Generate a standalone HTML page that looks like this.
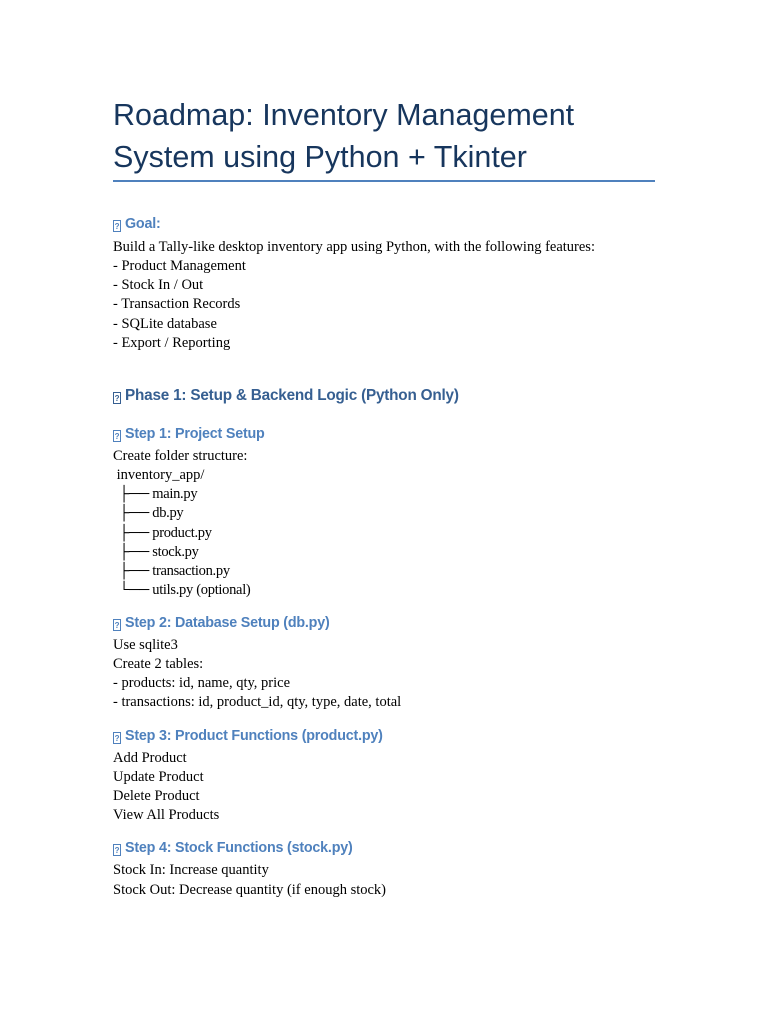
<!DOCTYPE html>
<html><head><meta charset="utf-8"><style>
body{margin:0;background:#fff;width:768px;height:1024px;position:relative;overflow:hidden}
div{position:absolute;left:113px;white-space:nowrap}
.t{font-family:"Liberation Sans",sans-serif;font-size:30.5px;color:#17365d;line-height:40px}
.b{font-family:"Liberation Serif",serif;font-size:14.5px;color:#000;line-height:18px}
.h1{font-family:"Liberation Sans",sans-serif;font-size:15.3px;font-weight:bold;color:#365f91;line-height:20px;letter-spacing:-0.2px}
.h2{font-family:"Liberation Sans",sans-serif;font-size:14.3px;font-weight:bold;color:#4f81bd;line-height:20px;letter-spacing:-0.2px}
.q{display:inline-block;width:8px;height:12px;border:1px solid currentColor;font-size:8px;line-height:11px;text-align:center;vertical-align:-1px;margin-right:4px;box-sizing:border-box}
.tr{left:119px;letter-spacing:-0.3px}
</style></head><body>
<div class="t" style="top:95px">Roadmap: Inventory Management</div>
<div class="t" style="top:137px">System using Python + Tkinter</div>
<div style="top:180px;width:542px;height:2px;background:#4f81bd"></div>

<div class="h2" style="top:214px"><span class="q">?</span>Goal:</div>
<div class="b" style="top:238px">Build a Tally-like desktop inventory app using Python, with the following features:</div>
<div class="b" style="top:257px">- Product Management</div>
<div class="b" style="top:276px">- Stock In / Out</div>
<div class="b" style="top:295px">- Transaction Records</div>
<div class="b" style="top:315px">- SQLite database</div>
<div class="b" style="top:334px">- Export / Reporting</div>

<div class="h1" style="top:386px"><span class="q">?</span>Phase 1: Setup &amp; Backend Logic (Python Only)</div>
<div class="h2" style="top:424px"><span class="q">?</span>Step 1: Project Setup</div>
<div class="b" style="top:447px">Create folder structure:</div>
<div class="b" style="top:466px">&nbsp;inventory_app/</div>
<div class="b tr" style="top:485px">├── main.py</div>
<div class="b tr" style="top:504px">├── db.py</div>
<div class="b tr" style="top:524px">├── product.py</div>
<div class="b tr" style="top:543px">├── stock.py</div>
<div class="b tr" style="top:562px">├── transaction.py</div>
<div class="b tr" style="top:581px">└── utils.py (optional)</div>

<div class="h2" style="top:613px"><span class="q">?</span>Step 2: Database Setup (db.py)</div>
<div class="b" style="top:636px">Use sqlite3</div>
<div class="b" style="top:655px">Create 2 tables:</div>
<div class="b" style="top:674px">- products: id, name, qty, price</div>
<div class="b" style="top:693px">- transactions: id, product_id, qty, type, date, total</div>

<div class="h2" style="top:726px"><span class="q">?</span>Step 3: Product Functions (product.py)</div>
<div class="b" style="top:749px">Add Product</div>
<div class="b" style="top:768px">Update Product</div>
<div class="b" style="top:787px">Delete Product</div>
<div class="b" style="top:806px">View All Products</div>

<div class="h2" style="top:838px"><span class="q">?</span>Step 4: Stock Functions (stock.py)</div>
<div class="b" style="top:861px">Stock In: Increase quantity</div>
<div class="b" style="top:881px">Stock Out: Decrease quantity (if enough stock)</div>
</body></html>
